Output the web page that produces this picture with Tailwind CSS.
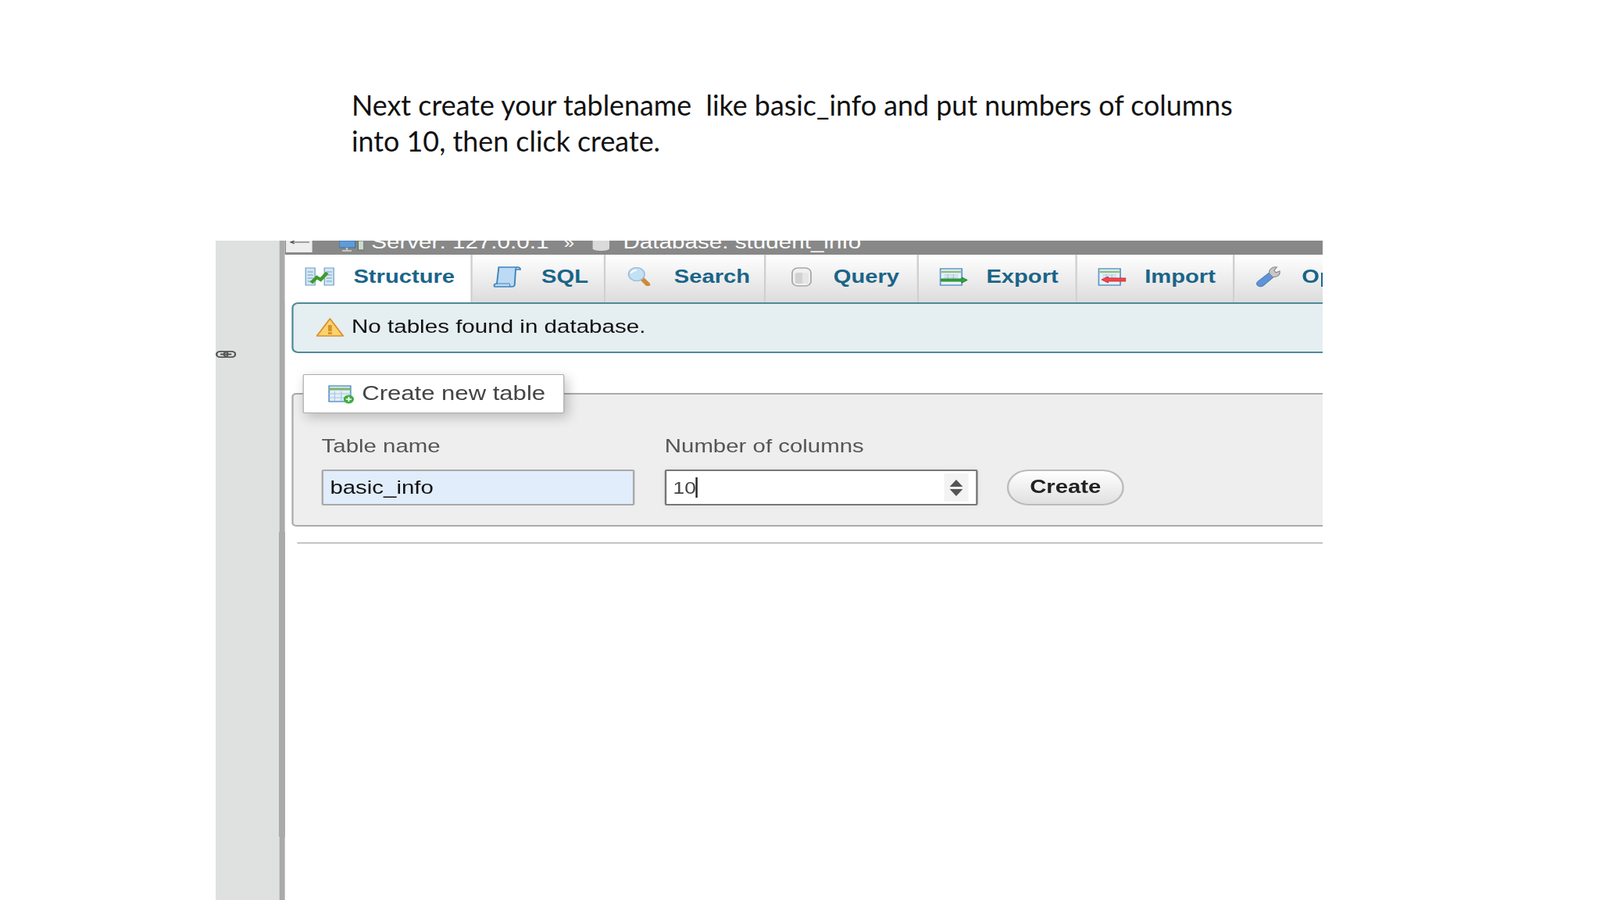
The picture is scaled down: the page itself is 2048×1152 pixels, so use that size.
<!DOCTYPE html>
<html lang="en">
<head>
    <meta charset="UTF-8">
    <title>Create table</title>
    <script src="https://cdn.jsdelivr.net/npm/@tailwindcss/browser@4"></script>
</head>
<body class="bg-white">
<div class="w-[2048px] h-[1152px] overflow-hidden flex flex-col bg-white">
    <!-- Slide text -->
    <p class="ml-[450px] mt-[112px] w-[1200px] text-[35.85px] leading-[46px] text-[#111] font-['Lato',sans-serif] whitespace-pre">Next create your tablename  like basic_info and put numbers of columns
into 10, then click create.</p>

    <!-- Pasted screenshot, the source was stretched sideways -->
    <div class="ml-[276px] mt-[104px] w-[1417px] h-[844px] overflow-hidden shrink-0">
        <div class="w-[1181px] h-[844px] origin-top-left scale-x-[1.2] flex font-['Liberation_Sans',sans-serif]">
            <!-- Sidebar -->
            <div class="w-[67.5px] h-full bg-[#dfe0e0] flex flex-col shrink-0">
                <svg class="w-[22px] h-[11px] mt-[140px]" viewBox="0 0 22 12" preserveAspectRatio="none" fill="none" stroke="#555" stroke-width="2">
                    <rect x="1" y="2" width="12" height="8" rx="4"/>
                    <rect x="9" y="2" width="12" height="8" rx="4"/>
                    <path d="M5 6h12"/>
                </svg>
            </div>
            <div class="w-[6.5px] h-full bg-[#aaaaaa] shrink-0"></div>

            <!-- Main -->
            <div class="flex-1 min-w-0 flex flex-col bg-white">
                <!-- Breadcrumb bar, cut off at the top -->
                <div class="h-[18px] bg-[#888888] flex items-start overflow-hidden shrink-0">
                    <div class="ml-[1px] w-[28px] h-[15px] bg-[#eeeeee] flex items-start justify-center shrink-0">
                        <svg class="w-[22px] h-[6px]" viewBox="0 0 22 6" fill="none" stroke="#555" stroke-width="1.2"><path d="M22 2H2M6 0 2 2l4 2"/></svg>
                    </div>
                    <div class="flex items-center h-[18px] text-white text-[24.7px] font-normal whitespace-nowrap ml-[29px]">
                        <svg class="w-[26px] h-[18px] mr-[8px] shrink-0" viewBox="0 0 26 18" preserveAspectRatio="none">
                            <rect x="0" y="0" width="17" height="9" fill="#5f9bd6" stroke="#3d6fa3"/>
                            <path d="M8 9v3M3 13h10" stroke="#c4c4c4" stroke-width="2"/>
                            <rect x="20" y="0" width="6" height="12" fill="#cfd8cf" stroke="#55785a"/>
                        </svg>
                        <span class="relative -top-[7px]">Server: 127.0.0.1</span>
                        <span class="relative -top-[7px] ml-[16px] text-[20px]">»</span>
                        <svg class="w-[18px] h-[18px] ml-[19px] mr-[15px] shrink-0" viewBox="0 0 15 18" preserveAspectRatio="none"><path d="M0 0h15v10c0 4-15 4-15 0z" fill="#dadada"/></svg>
                        <span class="relative -top-[7px]">Database: student_info</span>
                    </div>
                </div>

                <!-- Tabs -->
                <div class="h-[61px] flex text-[24.3px] font-bold text-[#1a6488] whitespace-nowrap shrink-0">
                    <div class="w-[197.5px] bg-white flex items-center pl-[21px] pb-[5px] gap-[20px] shrink-0">
                        <svg class="w-[32px] h-[24px] shrink-0" viewBox="0 0 32 24" preserveAspectRatio="none">
                            <rect x="1" y="1" width="10" height="22" fill="#d6e6f2" stroke="#6a9fc4"/>
                            <rect x="21" y="1" width="10" height="22" fill="#d6e6f2" stroke="#6a9fc4"/>
                            <path d="M3 6h6M3 10h6M3 14h6M3 18h6M23 6h6M23 10h6M23 14h6M23 18h6" stroke="#6a9fc4"/>
                            <path d="M7 20l6-7 4 3 7-9" fill="none" stroke="#3f9a2c" stroke-width="4"/>
                        </svg>
                        <span>Structure</span>
                    </div>
                    <div class="w-[142.5px] bg-gradient-to-b from-white to-[#dcdcdc] border-l-2 border-[#cfcfcf] flex items-center pl-[22px] pb-[5px] gap-[22px] shrink-0">
                        <svg class="w-[30px] h-[28px] shrink-0" viewBox="0 0 30 28" preserveAspectRatio="none">
                            <path d="M6 2h20c2 0 3 1 3 3h-5l-1 19c0 2-1 3-3 3H2c-1 0-1-1-1-1 0-2 1-3 3-3z" fill="#bcdaf3" stroke="#3f83bd" stroke-width="1.6"/>
                            <path d="M24 5c0-2 1-3 2-3M4 23h13c1 0 1 2 1 4" fill="none" stroke="#3f83bd"/>
                        </svg>
                        <span>SQL</span>
                    </div>
                    <div class="w-[171px] bg-gradient-to-b from-white to-[#dcdcdc] border-l-2 border-[#cfcfcf] flex items-center pl-[22px] pb-[5px] gap-[25px] shrink-0">
                        <svg class="w-[26px] h-[24px] shrink-0" viewBox="0 0 26 24" preserveAspectRatio="none">
                            <path d="M17 15l6 7" stroke="#cf8a3a" stroke-width="5" stroke-linecap="round"/>
                            <circle cx="11" cy="9" r="8.5" fill="#c4e0f5" stroke="#9cc0da" stroke-width="1.5"/>
                            <path d="M5 8c1-3 3-4 6-4" fill="none" stroke="#fff" stroke-width="2"/>
                        </svg>
                        <span>Search</span>
                    </div>
                    <div class="w-[163px] bg-gradient-to-b from-white to-[#dcdcdc] border-l-2 border-[#cfcfcf] flex items-center pl-[27px] pb-[5px] gap-[23px] shrink-0">
                        <svg class="w-[22px] h-[25px] shrink-0" viewBox="0 0 22 25" preserveAspectRatio="none">
                            <rect x="1" y="1" width="20" height="23" rx="6" fill="#f1f1f1" stroke="#a8a8a8" stroke-width="1.5"/>
                            <rect x="4" y="7" width="14" height="14" rx="2" fill="#d2d2d2"/>
                            <rect x="12" y="7" width="6" height="14" fill="#e6e6e6"/>
                        </svg>
                        <span>Query</span>
                    </div>
                    <div class="w-[169px] bg-gradient-to-b from-white to-[#dcdcdc] border-l-2 border-[#cfcfcf] flex items-center pl-[22px] pb-[5px] gap-[20px] shrink-0">
                        <svg class="w-[30px] h-[23px] shrink-0" viewBox="0 0 30 23" preserveAspectRatio="none">
                            <rect x="1" y="1" width="23" height="21" fill="#e8f1fa" stroke="#5f97c9" stroke-width="1.5"/>
                            <path d="M2 5h21" stroke="#8fc07c" stroke-width="2.5"/>
                            <path d="M5 9h15M5 12h15M9 8v7M15 8v7" stroke="#a9c6e0"/>
                            <path d="M2 14h22v-2l6 3.5-6 3.500v-2H2z" fill="#34a63c" stroke="#167a26" stroke-width=".8"/>
                        </svg>
                        <span>Export</span>
                    </div>
                    <div class="w-[167.5px] bg-gradient-to-b from-white to-[#dcdcdc] border-l-2 border-[#cfcfcf] flex items-center pl-[22px] pb-[5px] gap-[20px] shrink-0">
                        <svg class="w-[30px] h-[23px] shrink-0" viewBox="0 0 30 23" preserveAspectRatio="none">
                            <rect x="1" y="1" width="23" height="21" fill="#e8f1fa" stroke="#5f97c9" stroke-width="1.5"/>
                            <path d="M2 5h21" stroke="#8fc07c" stroke-width="2.500"/>
                            <path d="M5 9h15M5 12h15M9 8v7M15 8v7" stroke="#a9c6e0"/>
                            <path d="M30 13H11v-2l-7 4 7 4v-2h19z" fill="#f0484c" stroke="#c9252a" stroke-width=".8"/>
                        </svg>
                        <span>Import</span>
                    </div>
                    <div class="flex-1 bg-gradient-to-b from-white to-[#dcdcdc] border-l-2 border-[#cfcfcf] flex items-center pl-[22px] pb-[5px] gap-[20px] min-w-0">
                        <svg class="w-[30px] h-[28px] shrink-0" viewBox="0 0 30 28" preserveAspectRatio="none">
                            <path d="M3 26c-2-2-2-4 0-6L15 9l5 5L8 26c-2 1-4 1-5 0z" fill="#5f93d6" stroke="#4a7cc0"/>
                            <path d="M15 10c-1-5 3-9 8-8l-3 4 2 3 4-2c1 5-4 9-8 7z" fill="#c8c8c8" stroke="#8a8a8a"/>
                        </svg>
                        <span>Options</span>
                    </div>
                </div>

                <!-- Notice -->
                <div class="ml-[7px] h-[65px] bg-[#e5eef0] border-y-2 border-l-2 border-[#4f8a9a] rounded-l-[7px] flex items-center pl-[24px] pb-[2px] gap-[8px] text-[24.65px] text-[#111] shrink-0">
                    <svg class="w-[30px] h-[24px] shrink-0" viewBox="0 0 30 24" preserveAspectRatio="none">
                        <path d="M15 1 29 23H1z" fill="#fbd36a" stroke="#d9902f" stroke-width="1.5" stroke-linejoin="round"/>
                        <rect x="13" y="9" width="4" height="8" fill="#d9902f"/>
                        <rect x="13" y="18" width="4" height="3" fill="#d9902f"/>
                    </svg>
                    <span>No tables found in database.</span>
                </div>

                <!-- Create new table -->
                <div class="relative ml-[7px] mt-[51px] h-[171px] bg-[#eeeeee] border-y-2 border-l-2 border-[#aaaaaa] rounded-l-[5px] pl-[30px] pt-[54px] shrink-0">
                    <div class="absolute left-[10px] -top-[26px] w-[279px] h-[50px] pb-[2px] bg-white border border-[#aaaaaa] rounded-[2px] shadow-[3px_5px_14px_rgba(0,0,0,0.22)] flex items-center pl-[26px] gap-[8px] text-[25.9px] font-normal text-[#444]">
                        <svg class="w-[28px] h-[24px] mt-[3px] shrink-0" viewBox="0 0 28 24" preserveAspectRatio="none">
                            <rect x="1" y="1" width="23" height="20" fill="#e3eef8" stroke="#5f97c9" stroke-width="1.5"/>
                            <path d="M1 5h23" stroke="#7fb56a" stroke-width="3"/>
                            <path d="M7 8v12M14 8v12M1 11h23M1 16h23" stroke="#a9c6e0"/>
                            <circle cx="22" cy="18" r="5.5" fill="#3fae3f"/>
                            <path d="M19 18h6M22 15v6" stroke="#fff" stroke-width="1.5"/>
                        </svg>
                        <span>Create new table</span>
                    </div>
                    <div class="flex gap-[32px]">
                        <div class="w-[334px]">
                            <label class="block h-[24px] leading-[24px] text-[24.5px] text-[#555]">Table name</label>
                            <input type="text" value="basic_info" class="block mt-[18px] w-full h-[46px] px-[7px] bg-[#e1edfb] border-2 border-[#a9a9a9] rounded-[2px] text-[24.5px] text-[#111] outline-none">
                        </div>
                        <div class="w-[334px]">
                            <div class="h-[24px] leading-[24px] text-[24.5px] text-[#555]">Number of columns</div>
                            <div class="mt-[18px] h-[46px] bg-white border-2 border-[#777777] rounded-[2px] flex items-center px-[7px] text-[22px] text-[#444] shadow-[0_0_8px_rgba(0,0,0,0.05)]">
                                <span>10</span>
                                <span class="w-[1.5px] h-[26px] bg-[#222]"></span>
                                <div class="ml-auto mr-[1px] w-[26px] h-[36px] bg-[#f3f3f3] flex flex-col items-center justify-center gap-[3px]">
                                    <svg class="w-[14px] h-[9px]" viewBox="0 0 14 9"><path d="M7 0l7 9H0z" fill="#555"/></svg>
                                    <svg class="w-[14px] h-[9px]" viewBox="0 0 14 9"><path d="M7 9l7-9H0z" fill="#555"/></svg>
                                </div>
                            </div>
                        </div>
                        <div class="pt-[42px] -ml-[1px]">
                            <button class="block w-[125px] h-[46px] pb-[1px] rounded-full border-2 border-[#bbbbbb] bg-gradient-to-b from-white to-[#e0e0e0] text-[24.4px] font-bold text-[#222]">Create</button>
                        </div>
                    </div>
                </div>

                <!-- Rule below the form -->
                <div class="ml-[13px] mt-[20px] h-[2px] bg-[#c4c4c4] shrink-0"></div>
            </div>
        </div>
    </div>
</div>
</body>
</html>
